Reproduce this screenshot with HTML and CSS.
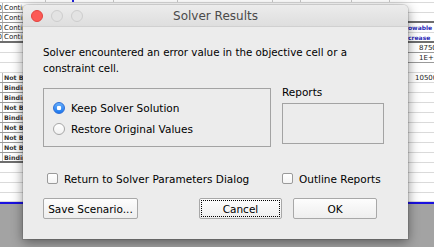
FILE: index.html
```html
<!DOCTYPE html>
<html>
<head>
<meta charset="utf-8">
<link rel="stylesheet" href="styles.css">
</head>
<body>
<div class="screen">
  <div class="sheet">
    <div class="row r0"><div class="l"></div><div class="m cols"></div><div class="r"></div></div>
    <div class="row"><div class="l bd"><span class="c0">0</span><span class="tx">Contin</span></div><div class="m"></div><div class="r"></div></div>
    <div class="row"><div class="l bd"><span class="c0">0</span><span class="tx">Contin</span></div><div class="m"></div><div class="r thick"></div></div>
    <div class="row"><div class="l bd"><span class="c0">0</span><span class="tx">Contin</span></div><div class="m"></div><div class="r hd">owable</div></div>
    <div class="row"><div class="l bd thick"><span class="c0">0</span><span class="tx">Contin</span></div><div class="m"></div><div class="r hd thick">crease</div></div>
    <div class="row"><div class="l"></div><div class="m"></div><div class="r bd v v1">8750</div></div>
    <div class="row"><div class="l"></div><div class="m"></div><div class="r bd v v1">1E+30</div></div>
    <div class="row"><div class="l"></div><div class="m"></div><div class="r"></div></div>
    <div class="row"><div class="l bd"><span class="c0"></span><span class="tx sm">Not Bi</span></div><div class="m"></div><div class="r v v2">10500</div></div>
    <div class="row"><div class="l bd"><span class="c0"></span><span class="tx sm">Bindir</span></div><div class="m"></div><div class="r"></div></div>
    <div class="row"><div class="l bd"><span class="c0"></span><span class="tx sm">Bindir</span></div><div class="m"></div><div class="r"></div></div>
    <div class="row"><div class="l bd"><span class="c0"></span><span class="tx sm">Not Bi</span></div><div class="m"></div><div class="r"></div></div>
    <div class="row"><div class="l bd"><span class="c0"></span><span class="tx sm">Bindir</span></div><div class="m"></div><div class="r"></div></div>
    <div class="row"><div class="l bd"><span class="c0"></span><span class="tx sm">Not Bi</span></div><div class="m"></div><div class="r"></div></div>
    <div class="row"><div class="l bd"><span class="c0"></span><span class="tx sm">Not Bi</span></div><div class="m"></div><div class="r"></div></div>
    <div class="row"><div class="l bd"><span class="c0"></span><span class="tx sm">Not Bi</span></div><div class="m"></div><div class="r"></div></div>
    <div class="row"><div class="l bd thick"><span class="c0"></span><span class="tx sm">Bindir</span></div><div class="m"></div><div class="r"></div></div>
    <div class="row"><div class="l"></div><div class="m"></div><div class="r"></div></div>
    <div class="row"><div class="l"></div><div class="m"></div><div class="r"></div></div>
    <div class="row"><div class="l"></div><div class="m"></div><div class="r"></div></div>
    <div class="row last"><div class="l"></div><div class="m"></div><div class="r"></div></div>
  </div>
  <div class="blueline"></div>

  <div class="dialog">
    <div class="titlebar">
      <div class="lights">
        <span class="light red"></span>
        <span class="light gray"></span>
        <span class="light gray"></span>
      </div>
      <div class="title">Solver Results</div>
      <div></div>
    </div>
    <div class="content">
      <p class="message">Solver encountered an error value in the objective cell or a constraint cell.</p>
      <div class="grid main">
        <div class="group">
          <label class="opt"><span class="radio on"></span>Keep Solver Solution</label>
          <label class="opt"><span class="radio"></span>Restore Original Values</label>
        </div>
        <div class="reports">
          <div class="rlabel">Reports</div>
          <div class="rbox"></div>
        </div>
      </div>
      <div class="grid checks">
        <label class="chk first"><span class="box"></span>Return to Solver Parameters Dialog</label>
        <label class="chk"><span class="box"></span>Outline Reports</label>
      </div>
      <div class="buttons">
        <div class="btn save">Save Scenario...</div>
        <div class="btn cancel"><span class="focus">Cancel</span></div>
        <div class="btn ok">OK</div>
      </div>
    </div>
  </div>
</div>
</body>
</html>
```

FILE: styles.css
```css
html, body {
  margin: 0;
  padding: 0;
}
body {
  width: 434px;
  height: 247px;
  overflow: hidden;
  background: #a3a3a3;
}
.screen {
  position: relative;
  width: 434px;
  height: 247px;
  overflow: hidden;
  background: #a3a3a3;
}

/* spreadsheet behind */
.sheet {
  background: #fff;
  width: 434px;
  height: 202px;
  display: flex;
  flex-direction: column;
  font-family: "DejaVu Sans", sans-serif;
  font-size: 7px;
  color: #222;
}
.row {
  display: flex;
  height: 10px;
  flex: none;
}
.row.r0 { height: 3px; }
.row.last { height: 9px; }
.row > div {
  box-sizing: border-box;
  border-bottom: 1px solid #dadada;
  height: 100%;
  overflow: hidden;
  white-space: nowrap;
  display: flex;
  align-items: center;
}
.l { width: 23px; flex: none; }
.m { flex: 1; }
.r { width: 26px; flex: none; }
.row > .bd { border-bottom-color: #9a9a9a; }
.row > .thick { border-bottom: 2px solid #6e6e6e; }
.cols {
  background:
    linear-gradient(#c8c8c8, #c8c8c8) 22px 0 / 1px 100% no-repeat,
    linear-gradient(#2222dd, #2222dd) 49px 0 / 2px 100% no-repeat,
    linear-gradient(#c8c8c8, #c8c8c8) 90px 0 / 1px 100% no-repeat,
    linear-gradient(#c8c8c8, #c8c8c8) 154px 0 / 1px 100% no-repeat,
    linear-gradient(#c8c8c8, #c8c8c8) 249px 0 / 1px 100% no-repeat,
    linear-gradient(#c8c8c8, #c8c8c8) 277px 0 / 1px 100% no-repeat,
    linear-gradient(#c8c8c8, #c8c8c8) 328px 0 / 1px 100% no-repeat,
    linear-gradient(#c8c8c8, #c8c8c8) 366px 0 / 1px 100% no-repeat;
}
.c0 {
  width: 3px;
  height: 100%;
  flex: none;
  display: flex;
  align-items: center;
  justify-content: flex-end;
  overflow: hidden;
  border-right: 1px solid #b5b5b5;
  box-sizing: border-box;
}
.tx {
  padding-left: 1px;
  color: #222;
}
.tx.sm {
  font-size: 6.3px;
  font-weight: bold;
  color: #333;
}
.hd {
  color: #2a2ab8;
  font-weight: bold;
  font-size: 6px;
}
.v1 { padding-left: 11px; }
.v2 { padding-left: 7px; }

.blueline {
  height: 2px;
  background: #1a10e0;
}

/* dialog window */
.dialog {
  position: absolute;
  left: 23px;
  top: 5px;
  width: 385px;
  height: 234px;
  background: #ececec;
  border-radius: 5px 5px 0 0;
  box-shadow: 0 3px 12px rgba(0, 0, 0, 0.45), 0 0 0 1px rgba(0, 0, 0, 0.1);
  display: flex;
  flex-direction: column;
  font-family: "DejaVu Sans", sans-serif;
  font-size: 10.5px;
  color: #000;
}
.titlebar {
  height: 22px;
  box-sizing: border-box;
  border-bottom: 1px solid #d0d0d0;
  background: linear-gradient(#ececec, #dedede);
  border-radius: 5px 5px 0 0;
  display: grid;
  grid-template-columns: 1fr auto 1fr;
  align-items: center;
}
.lights {
  display: flex;
  gap: 8px;
  padding-left: 8px;
}
.light {
  width: 12px;
  height: 12px;
  border-radius: 50%;
  box-sizing: border-box;
}
.light.red {
  background: #fc5a55;
  border: 1px solid #e2433f;
}
.light.gray {
  background: #e3e3e3;
  border: 1px solid #cdcdcd;
}
.title {
  font-size: 12px;
  color: #4a4a4a;
}

.content {
  padding: 0 24px 0 20px;
  display: flex;
  flex-direction: column;
}
.message {
  margin: 17px 0 0 0;
  width: 330px;
  font-size: 10.3px;
  line-height: 16px;
}
.grid {
  display: grid;
  grid-template-columns: 228px 102px;
  column-gap: 11px;
}
.main {
  margin-top: 12px;
}
.group {
  height: 59px;
  box-sizing: border-box;
  border: 1px solid #a3a3a3;
  padding: 8px 0 0 9px;
  display: flex;
  flex-direction: column;
}
.opt {
  height: 21px;
  display: flex;
  align-items: center;
  gap: 6px;
}
.radio {
  width: 12px;
  height: 12px;
  border-radius: 50%;
  box-sizing: border-box;
  border: 1px solid #a6a6a6;
  background: linear-gradient(#ffffff, #f1f1f1);
  flex: none;
}
.radio.on {
  border-color: #2f6ed6;
  background:
    radial-gradient(circle, #fff 0 2px, rgba(255,255,255,0) 2.6px),
    linear-gradient(#65aefc, #1b77ee);
}
.reports {
  display: flex;
  flex-direction: column;
}
.rlabel {
  margin-top: -2px;
  line-height: 12px;
  height: 12px;
}
.rbox {
  margin-top: 5px;
  height: 41px;
  box-sizing: border-box;
  border: 1px solid #a3a3a3;
}
.checks {
  margin-top: 26px;
  height: 11px;
}
.chk {
  display: flex;
  align-items: center;
  gap: 6px;
  white-space: nowrap;
  height: 11px;
}
.chk.first { padding-left: 4px; }
.box {
  width: 11px;
  height: 11px;
  box-sizing: border-box;
  border: 1px solid #9a9a9a;
  border-radius: 2px;
  background: linear-gradient(#ffffff, #f4f4f4);
  flex: none;
}
.buttons {
  margin-top: 14px;
  display: flex;
  gap: 11px;
  padding-right: 7px;
}
.btn {
  height: 21px;
  box-sizing: border-box;
  border: 1px solid #a8a8a8;
  border-radius: 2px;
  background: linear-gradient(#fdfdfd, #eeeeee);
  display: flex;
  align-items: center;
  justify-content: center;
  white-space: nowrap;
}
.save { width: 95px; }
.cancel {
  width: 83px;
  margin-left: auto;
  padding: 1px;
}
.focus {
  flex: 1;
  align-self: stretch;
  display: flex;
  align-items: center;
  justify-content: center;
  border: 1px dotted #000;
}
.ok { width: 84px; }
```
